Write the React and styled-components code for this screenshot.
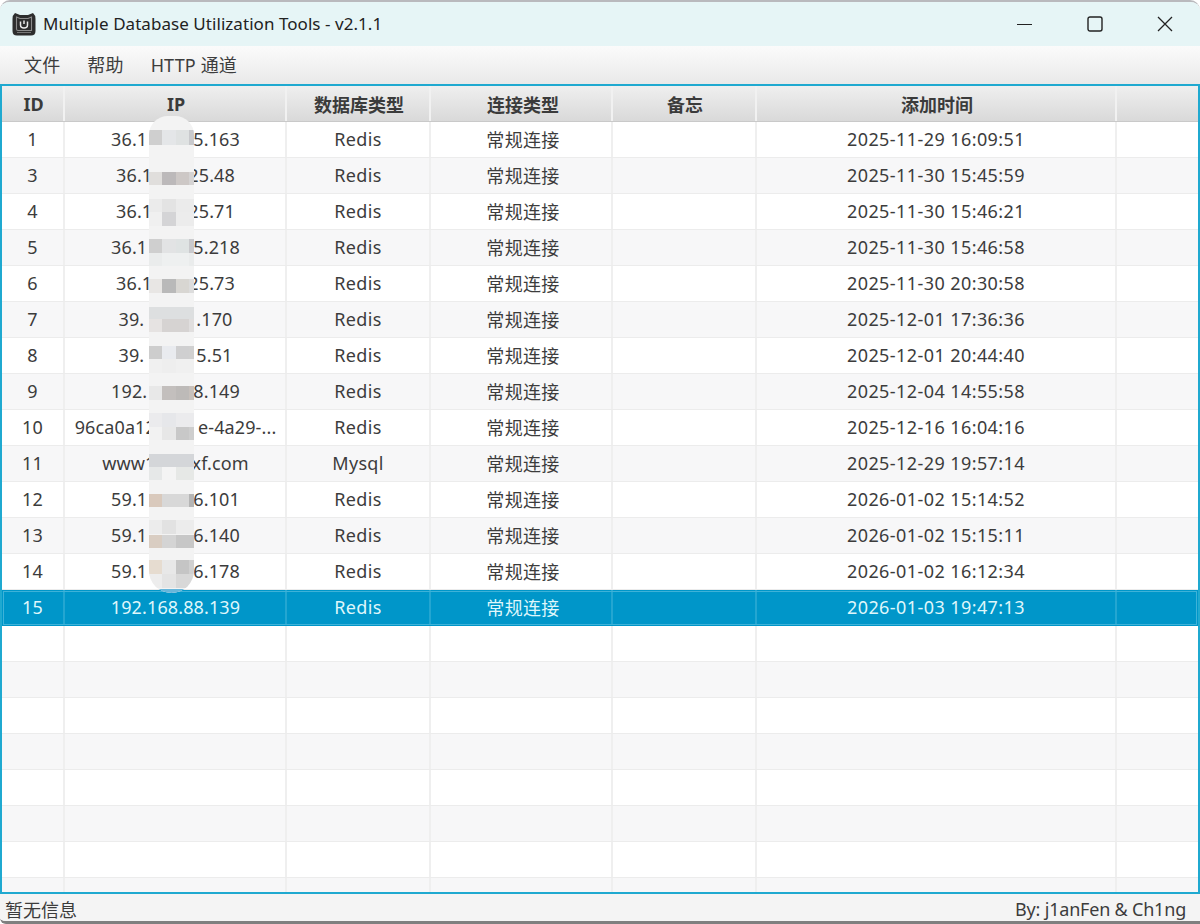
import React from "react";
import styled, { createGlobalStyle } from "styled-components";

const Global = createGlobalStyle`
  html, body { margin: 0; padding: 0; background: #fff; }
  body { font-family: "Noto Sans", "Noto Sans CJK SC", sans-serif; }
`;
const cols = "63px 222px 144px 182px 144px 360px 81px";
const Win = styled.div`
  width: 1200px; height: 924px; box-sizing: border-box; display: flex; flex-direction: column;
  position: relative; overflow: hidden; background: #f4f4f4; border-radius: 10px 10px 0 6px;
  border-top: 2px solid #b9b9bd; border-bottom: 3px solid #7f7f7f;
`;
const TitleBar = styled.div`
  height: 44px; flex: none; box-sizing: border-box; display: flex; align-items: center; padding-left: 12px; background: #e6f5f6;
`;
const Title = styled.div`
  margin-left: 7px; padding-bottom: 2px; font-size: 17px; color: #222; letter-spacing: .05px; white-space: nowrap; flex: 1;
`;
const WinBtn = styled.div`
  width: 70px; height: 44px; display: flex; align-items: center; justify-content: center;
`;
const MenuBar = styled.div`
  height: 38px; flex: none; box-sizing: border-box; display: flex; align-items: center; padding: 0 0 3px 24px; gap: 27px;
  background: linear-gradient(#fbfbfb, #e9e9e9);
`;
const MenuItem = styled.div`font-size: 18px; color: #3d3d3d; white-space: nowrap; letter-spacing: .15px;`;
const Table = styled.div`
  flex: 1; min-height: 0; border: 2px solid #1fa9d0; overflow: hidden; background: #fff;
`;
const HeaderRow = styled.div`
  display: grid; grid-template-columns: ${cols}; height: 36px; box-sizing: border-box;
  background: linear-gradient(#efefef, #d9d9d9); border-bottom: 1px solid #c9c9c9;
`;
const HeaderCell = styled.div`
  display: flex; align-items: center; justify-content: center; font-size: 18px; font-weight: 700; color: #3b3b3b;
  box-sizing: border-box; padding-left: 2px;
  border-right: 2px solid #f1f1f1;
  &:nth-child(4) { padding-left: 4px; }
  &:last-child { border-right: 0; }
`;
const Row = styled.div`
  display: grid; grid-template-columns: ${cols}; height: 36px; box-sizing: border-box;
  background: ${p => p.$selected ? "#0096c9" : p.$odd ? "#f7f7f8" : "#fff"};
  color: ${p => p.$selected ? "#dff6fb" : "#3c3c3c"};
  border-bottom: 1px solid ${p => p.$selected ? "#0096c9" : "#ececec"};
  outline: ${p => p.$selected ? "1px solid #3eb2d8" : "none"};
  outline-offset: -2px;
`;
const Cell = styled.div`
  display: flex; align-items: center; justify-content: center; font-size: 18px; letter-spacing: .32px;
  white-space: nowrap; overflow: hidden; padding-bottom: 2px; box-sizing: border-box;
  border-right: 2px solid ${p => p.$selected ? "#24a6d1" : "#efefef"};
  &:nth-child(2) { letter-spacing: .12px; padding-left: 1px; }
  &:nth-child(4) { padding-left: 4px; }
  &:nth-child(6) { letter-spacing: .42px; }
  &:last-child { border-right: 0; }
`;
const Gap = styled.span`display: inline-block; width: ${p => p.$w}px;`;
const Status = styled.div`
  height: 27px; flex: none; box-sizing: border-box; display: flex; justify-content: space-between; align-items: center;
  padding: 3px 14px 0 5px; font-size: 18px; color: #3c3c3c; background: #f4f4f4;
`;
const Author = styled.span`letter-spacing: -.2px;`;
const Mosaic = styled.div`
  position: absolute; left: 149px; top: 114px; width: 45px; height: 477px; border-radius: 20px 20px 24px 24px;
  background: #f3f3f3; overflow: hidden;
`;
const Tint = styled.div`
  position: absolute; left: 8px; right: 8px; bottom: 0; height: 4px; background: #68b6da; border-radius: 50% 50% 0 0 / 100% 100% 0 0;
  transform: scaleY(-1);
`;
const Band = styled.div`
  position: absolute; left: 0; right: 0; display: grid; grid-template-columns: 13px 14px 13px 5px;
`;
const Patch = styled.div`background: ${p => p.$c};`;

// [id, left text, hidden gap, right text, type, time]
const data = [
  ["1","36.1",46,"5.163","Redis","2025-11-29 16:09:51"],
  ["3","36.1",36,"25.48","Redis","2025-11-30 15:45:59"],
  ["4","36.1",36,"25.71","Redis","2025-11-30 15:46:21"],
  ["5","36.1",46,"5.218","Redis","2025-11-30 15:46:58"],
  ["6","36.1",36,"25.73","Redis","2025-11-30 20:30:58"],
  ["7","39.",52,".170","Redis","2025-12-01 17:36:36"],
  ["8","39.",52,"5.51","Redis","2025-12-01 20:44:40"],
  ["9","192.",46,"8.149","Redis","2025-12-04 14:55:58"],
  ["10","96ca0a12",42,"e-4a29-...","Redis","2025-12-16 16:04:16"],
  ["11","www1",36,"xf.com","Mysql","2025-12-29 19:57:14"],
  ["12","59.1",46,"6.101","Redis","2026-01-02 15:14:52"],
  ["13","59.1",46,"6.140","Redis","2026-01-02 15:15:11"],
  ["14","59.1",46,"6.178","Redis","2026-01-02 16:12:34"],
];
const heads = ["ID","IP","数据库类型","连接类型","备忘","添加时间",""];
// [top in the strip, height, four tones]
const bands = [
  [14,15,["#cfcfcf","#e4e6e8","#dfe2e2","#c8c9cc"]],
  [56,13,["#e0dedc","#bcb9ba","#cdc8c6","#d5d3d3"]],
  [83,13,["#ebebeb","#e3e3e3","#ebebeb","#ebebeb"]],
  [96,14,["#f0f0f0","#d4d4d6","#ececec","#ececec"]],
  [123,14,["#cfcfcf","#e2e3e4","#dfe3e3","#c9c9cc"]],
  [137,13,["#eaecec","#eef0f0","#eef0f0","#eaecec"]],
  [163,14,["#e8e6e4","#b9b9b9","#d8d6d2","#dcdcdc"]],
  [191,12,["#dddfe0","#dddfe0","#dddfe0","#dddfe0"]],
  [203,13,["#e6e3e2","#d6d3d2","#d6d3d2","#e0dede"]],
  [230,13,["#cdcdcd","#e9ebef","#cfcfd0","#d0d0d0"]],
  [243,14,["#f0f0f0","#eeeeee","#f0f0f0","#f0f0f0"]],
  [270,14,["#e8e8e8","#c3bfbd","#bdbab8","#c7c0bb"]],
  [297,14,["#ebebed","#e6e7ea","#ebebed","#ebebed"]],
  [311,13,["#f2f2f2","#e7e7e7","#c8c8c8","#cecece"]],
  [338,13,["#d4d6d9","#d4d6d9","#d4d6d9","#d4d6d9"]],
  [351,13,["#e6e8e8","#f4f4f4","#e6e8e6","#e6e8e6"]],
  [378,13,["#d9c9bc","#d8d8d8","#d8d8d8","#b5b5b5"]],
  [404,14,["#ececec","#e2e2e2","#ececec","#ececec"]],
  [419,13,["#d9cdc2","#d4d4d4","#c7c7c7","#c7c7c7"]],
  [444,14,["#e6dcd0","#e8e8e8","#c5c5c5","#d0d0d0"]],
  [458,14,["#ededed","#e4e4e4","#d8d8d8","#d8d8d8"]],
];

function Logo() {
  return (
    <svg width="24" height="24" viewBox="0 0 24 24">
      <path d="M3 1 L8 3 H16 L21 1 Q23.5 3 23.5 7 V19 Q23.5 23.5 19 23.5 H5 Q0.5 23.5 0.5 19 V7 Q0.5 3 3 1Z" fill="#2d2d2d" />
      <path d="M4.5 5 L8 6.5 H16 L19.5 5 V18.5 H6 Q4.5 18.5 4.5 17Z" fill="none" stroke="#8b8b8b" strokeWidth="1.1" />
      <path d="M8.5 9.5 V13 Q8.5 16 12 16 Q15.5 16 15.5 13 V9.5 M12 8.5 V12" fill="none" stroke="#e8e8e8" strokeWidth="1.5" />
      <path d="M5 20.5 H19" stroke="#777" strokeWidth="1" />
    </svg>
  );
}

export default function App() {
  return (
    <>
      <Global />
      <Win>
        <TitleBar>
          <Logo />
          <Title>Multiple Database Utilization Tools - v2.1.1</Title>
          <WinBtn><svg width="16" height="16" viewBox="0 0 16 16"><path d="M0 8.5H15" stroke="#222" strokeWidth="1.2" /></svg></WinBtn>
          <WinBtn><svg width="16" height="16" viewBox="0 0 16 16"><rect x="1" y="1" width="14" height="14" rx="2" fill="none" stroke="#222" strokeWidth="1.4" /></svg></WinBtn>
          <WinBtn><svg width="16" height="16" viewBox="0 0 16 16"><path d="M1 1L15 15M15 1L1 15" stroke="#222" strokeWidth="1.3" /></svg></WinBtn>
        </TitleBar>
        <MenuBar>
          <MenuItem>文件</MenuItem>
          <MenuItem>帮助</MenuItem>
          <MenuItem>HTTP 通道</MenuItem>
        </MenuBar>
        <Table>
          <HeaderRow>{heads.map((h, i) => <HeaderCell key={i}>{h}</HeaderCell>)}</HeaderRow>
          {Array.from({ length: 22 }).map((_, i) => {
            const d = data[i];
            const sel = i === 13;
            const filled = d || sel;
            const ip = d ? <>{d[1]}<Gap $w={d[2]} />{d[3]}</> : sel ? "192.168.88.139" : "";
            return (
              <Row key={i} $odd={i % 2 === 1} $selected={sel}>
                <Cell $selected={sel}>{d ? d[0] : sel ? "15" : ""}</Cell>
                <Cell $selected={sel}>{ip}</Cell>
                <Cell $selected={sel}>{d ? d[4] : sel ? "Redis" : ""}</Cell>
                <Cell $selected={sel}>{filled ? "常规连接" : ""}</Cell>
                <Cell $selected={sel} />
                <Cell $selected={sel}>{d ? d[5] : sel ? "2026-01-03 19:47:13" : ""}</Cell>
                <Cell $selected={sel} />
              </Row>
            );
          })}
        </Table>
        <Status><span>暂无信息</span><Author>By: j1anFen &amp; Ch1ng</Author></Status>
        <Mosaic>
          {bands.map((b, i) => (
            <Band key={i} style={{ top: b[0], height: b[1] }}>
              {b[2].map((c, j) => <Patch key={j} $c={c} />)}
            </Band>
          ))}
          <Tint />
        </Mosaic>
      </Win>
    </>
  );
}
